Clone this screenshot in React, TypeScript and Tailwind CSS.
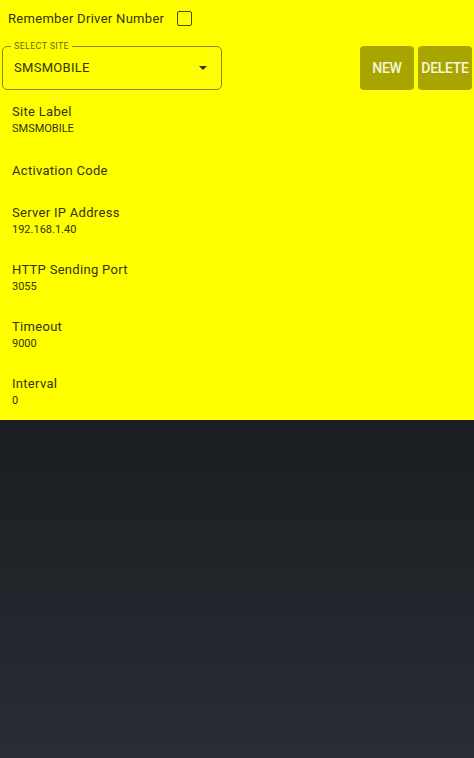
import { useState } from 'react'

const fields = [
    { label: 'Site Label', value: 'SMSMOBILE' },
    { label: 'Activation Code', value: '' },
    { label: 'Server IP Address', value: '192.168.1.40' },
    { label: 'HTTP Sending Port', value: '3055' },
    { label: 'Timeout', value: '9000' },
    { label: 'Interval', value: '0' },
]

export default function App() {
    const [remember, setRemember] = useState(false)

    return (
        <div className="min-h-[758px] flex flex-col font-['Roboto',sans-serif]">
            <div className="bg-[#ffff00] text-[#33330f] pb-[11px]">
                {/* Remember row */}
                <div className="flex items-center h-[37px] pl-2">
                    <span className="text-[13px] tracking-[0.3px]">Remember Driver Number</span>
                    <button
                        onClick={() => setRemember(!remember)}
                        className="ml-[13px] size-[15px] rounded-[2px] border-[1.5px] border-[#4a4a12]"
                    />
                </div>

                {/* Site select + actions */}
                <div className="flex items-center mt-[9px] pl-[2px] pr-[2px]">
                    <div className="relative w-[220px] h-[44px] rounded-[5px] border border-[#87872a] flex items-center pl-[11px] pr-[14px]">
                        <span className="absolute -top-[6px] left-[8px] px-[3px] bg-[#ffff00] text-[9px] leading-[10px] tracking-[0.3px] text-[#6b6b1f]">
                            SELECT SITE
                        </span>
                        <span className="text-[13px] tracking-[0.3px] flex-1">SMSMOBILE</span>
                        <svg width="8" height="4" viewBox="0 0 8 4">
                            <path d="M0 0h8L4 4z" fill="#33330f" />
                        </svg>
                    </div>
                    <div className="ml-auto flex gap-1">
                        <button className="w-[54px] h-[44px] rounded-[4px] bg-[#a8a500] text-[#f7f7dc] text-[14px] font-medium tracking-[-0.3px]">
                            NEW
                        </button>
                        <button className="w-[54px] h-[44px] rounded-[4px] bg-[#a8a500] text-[#f7f7dc] text-[14px] font-medium tracking-[-0.3px]">
                            DELETE
                        </button>
                    </div>
                </div>

                {/* Fields */}
                <div className="flex flex-col gap-[23px] mt-[13px] px-3">
                    {fields.map((f, i) => (
                        <div key={f.label} className={i === 0 ? 'flex flex-col mb-[2px]' : 'flex flex-col'}>
                            <span className="text-[13px] leading-[18px] tracking-[0.3px]">{f.label}</span>
                            {f.value ? (
                                <span className="text-[11px] leading-[16px]">{f.value}</span>
                            ) : (
                                <span className="h-[1px]" />
                            )}
                        </div>
                    ))}
                </div>
            </div>
            <div className="flex-1 bg-gradient-to-b from-[#1a1d21] to-[#292d34]" />
        </div>
    )
}
